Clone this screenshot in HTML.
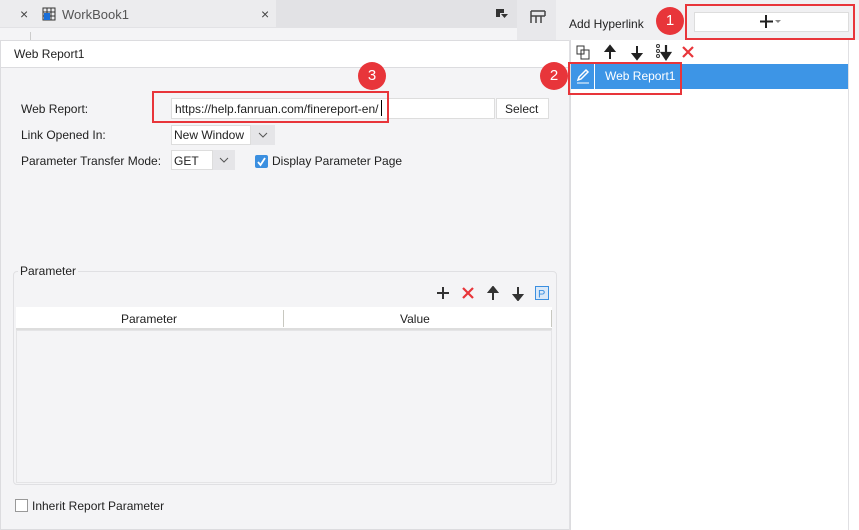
<!DOCTYPE html>
<html><head><meta charset="utf-8"><style>
*{box-sizing:border-box;margin:0;padding:0}
body{width:859px;height:530px;position:relative;overflow:hidden;background:#fff;font-family:"Liberation Sans",Arial,sans-serif;font-size:12px;color:#222}
.a{position:absolute}
.t{position:absolute;white-space:nowrap}
.badge{position:absolute;width:28px;height:28px;border-radius:50%;background:#e8353a;color:#fff;font-size:15px;text-align:center;line-height:28px}
.red{position:absolute;border:2px solid #e8353a}
</style></head><body>
<!-- top bar -->
<div class="a" style="left:0;top:0;width:556px;height:28px;background:#e2e2e5"></div>
<div class="a" style="left:0;top:0;width:276px;height:27px;background:#ececee"></div>
<div class="t" style="left:20px;top:6px;font-size:14px;color:#444">×</div>
<svg class="a" style="left:42px;top:7px" width="14" height="14"><rect x="1" y="1" width="12" height="12" fill="none" stroke="#333"/><path d="M1 5H13M1 9H13M5 1V13M9 1V13" stroke="#333"/><rect x="2" y="6" width="6" height="7" fill="#1a6fd8"/></svg>
<div class="t" style="left:62px;top:7px;font-size:13px;color:#555">WorkBook1</div>
<div class="t" style="left:261px;top:6px;font-size:14px;color:#444">×</div>
<svg class="a" style="left:496px;top:9px" width="12" height="10"><path d="M0 0H8V4H4V8H0Z" fill="#333"/><path d="M5 5H12L8.5 9Z" fill="#333"/></svg>
<div class="a" style="left:517px;top:0;width:39px;height:40px;background:#e8e8eb"></div>
<svg class="a" style="left:530px;top:10px" width="16" height="14"><path d="M1 1H15M1 1V13M1 6H15M6 6V13M11 6V13M15 1V6" stroke="#444" stroke-width="1.5" fill="none"/></svg>
<div class="a" style="left:0;top:28px;width:517px;height:12px;background:#f4f4f6"></div>
<div class="a" style="left:30px;top:32px;width:1px;height:8px;background:#ccc"></div>
<!-- dialog -->
<div class="a" style="left:0;top:40px;width:571px;height:490px;background:#f4f4f6;border:1px solid #dcdcdf"></div>
<div class="a" style="left:1px;top:41px;width:569px;height:27px;background:#fff;border-bottom:1px solid #dcdcdf"></div>
<div class="t" style="left:14px;top:47px">Web Report1</div>
<div class="t" style="left:21px;top:102px">Web Report:</div>
<div class="a" style="left:171px;top:98px;width:324px;height:21px;background:#fff;border:1px solid #ddd"></div>
<div class="t" style="left:175px;top:102px">https://help.fanruan.com/finereport-en/</div>
<div class="a" style="left:381px;top:100px;width:1px;height:16px;background:#000"></div>
<div class="a" style="left:496px;top:98px;width:53px;height:21px;background:#fff;border:1px solid #ddd"></div>
<div class="t" style="left:505px;top:102px">Select</div>
<div class="red" style="left:152px;top:91px;width:237px;height:32px"></div>
<div class="badge" style="left:358px;top:62px">3</div>
<div class="t" style="left:21px;top:128px">Link Opened In:</div>
<div class="a" style="left:171px;top:125px;width:80px;height:20px;background:#fff;border:1px solid #ddd"></div>
<div class="a" style="left:251px;top:125px;width:24px;height:20px;background:#e5e5e8"></div>
<div class="t" style="left:174px;top:128px">New Window</div>
<svg class="a" style="left:258px;top:132px" width="10" height="6"><path d="M1 1L5 5L9 1" stroke="#555" fill="none"/></svg>
<div class="t" style="left:21px;top:154px">Parameter Transfer Mode:</div>
<div class="a" style="left:171px;top:150px;width:42px;height:20px;background:#fff;border:1px solid #ddd"></div>
<div class="a" style="left:213px;top:150px;width:22px;height:20px;background:#e5e5e8"></div>
<div class="t" style="left:174px;top:154px">GET</div>
<svg class="a" style="left:219px;top:157px" width="10" height="6"><path d="M1 1L5 5L9 1" stroke="#555" fill="none"/></svg>
<div class="a" style="left:255px;top:155px;width:13px;height:13px;background:#3b8fe0;border-radius:2px"></div>
<svg class="a" style="left:256px;top:156px" width="11" height="11"><path d="M2 6L4.5 9L9 2" stroke="#fff" stroke-width="1.8" fill="none"/></svg>
<div class="t" style="left:272px;top:154px">Display Parameter Page</div>
<!-- parameter group -->
<div class="a" style="left:13px;top:271px;width:544px;height:214px;border:1px solid #e0e0e3;border-radius:4px"></div>
<div class="t" style="left:18px;top:264px;background:#f4f4f6;padding:0 2px">Parameter</div>
<svg class="a" style="left:436px;top:286px" width="116" height="15"><path d="M7 1V13M1 7H13" stroke="#333" stroke-width="2"/><path d="M27 2L37 12M37 2L27 12" stroke="#e8353a" stroke-width="2.2"/><path d="M57 14V3M53 6L57 1L61 6Z" stroke="#333" stroke-width="2" fill="#333"/><path d="M82 1V12M78 9L82 14L86 9Z" stroke="#333" stroke-width="2" fill="#333"/><rect x="99.5" y="0.5" width="13" height="13" fill="#dbe9f8" stroke="#3b8fe0"/><text x="102" y="11.5" font-size="11" fill="#3b8fe0" font-family="Liberation Sans">P</text></svg>
<div class="a" style="left:16px;top:307px;width:536px;height:23px;background:#fff;border-bottom:2px solid #ddd"></div>
<div class="a" style="left:283px;top:310px;width:1px;height:17px;background:#c8c8c0"></div>
<div class="a" style="left:551px;top:310px;width:1px;height:17px;background:#c8c8c0"></div>
<div class="t" style="left:121px;top:312px">Parameter</div>
<div class="t" style="left:400px;top:312px">Value</div>
<div class="a" style="left:16px;top:330px;width:536px;height:153px;border:1px solid #e4e4e6"></div>
<div class="a" style="left:15px;top:499px;width:13px;height:13px;border:1px solid #999;background:#fff"></div>
<div class="t" style="left:32px;top:499px">Inherit Report Parameter</div>
<!-- right panel -->
<div class="a" style="left:556px;top:0;width:303px;height:40px;background:#f0f0f2"></div>
<div class="a" style="left:571px;top:40px;width:288px;height:490px;background:#fff"></div>
<div class="a" style="left:569px;top:40px;width:1px;height:490px;background:#e0e0e3"></div>
<div class="a" style="left:848px;top:40px;width:1px;height:490px;background:#e0e0e3"></div>
<div class="t" style="left:569px;top:17px">Add Hyperlink</div>
<div class="a" style="left:694px;top:12px;width:155px;height:20px;background:#fff;border:1px solid #ddd"></div>
<svg class="a" style="left:759px;top:14px" width="24" height="16"><path d="M7 1V14M1 7.5H14" stroke="#222" stroke-width="2"/><path d="M16 6H22L19 9Z" fill="#888"/></svg>
<div class="red" style="left:685px;top:4px;width:170px;height:36px"></div>
<div class="badge" style="left:656px;top:7px">1</div>
<svg class="a" style="left:575px;top:43px" width="120" height="18"><path d="M2 3H9V11H2Z M6 7H14V16H6Z" stroke="#333" fill="#fff"/><path d="M35 16V5M31 8L35 3L39 8Z" stroke="#222" stroke-width="2" fill="#222"/><path d="M62 3V14M58 11L62 16L66 11Z" stroke="#222" stroke-width="2" fill="#222"/><circle cx="83" cy="3" r="1.5" stroke="#333" fill="none"/><circle cx="83" cy="8" r="1.5" stroke="#333" fill="none"/><circle cx="83" cy="13" r="1.5" stroke="#333" fill="none"/><path d="M91 2V13M87 10L91 16L95 10Z" stroke="#222" stroke-width="2.2" fill="#222"/><path d="M108 4L118 14M118 4L108 14" stroke="#e8353a" stroke-width="2.2"/></svg>
<div class="a" style="left:571px;top:64px;width:277px;height:25px;background:#3d95e6"></div>
<div class="a" style="left:594px;top:64px;width:1px;height:25px;background:#fff"></div>
<svg class="a" style="left:575px;top:68px" width="16" height="16"><path d="M3 12L4 9L11 2L13 4L6 11Z" fill="none" stroke="#fff" stroke-width="1.5"/><path d="M2 15H14" stroke="#fff"/></svg>
<div class="t" style="left:605px;top:69px;color:#fff">Web Report1</div>
<div class="red" style="left:568px;top:62px;width:114px;height:33px"></div>
<div class="badge" style="left:540px;top:62px">2</div>
</body></html>
